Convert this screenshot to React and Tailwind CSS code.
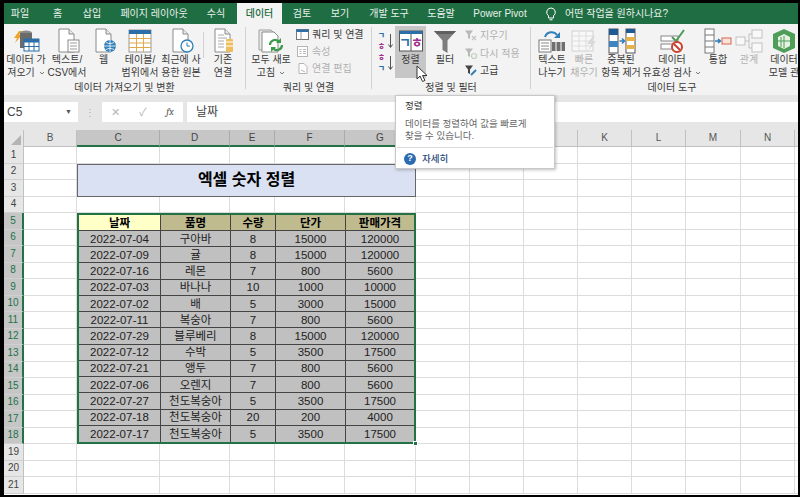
const tabs = [
  ["파일", "w-[32px]"],
  ["홈", "w-[43px]"],
  ["삽입", "w-[26px]"],
  ["페이지 레이아웃", "w-[98px]"],
  ["수식", "w-[26px] mr-[8px]"],
];
const tabsAfter = [
  ["검토", "w-[40px]"],
  ["보기", "w-[36px]"],
  ["개발 도구", "w-[62px]"],
  ["도움말", "w-[42px]"],
  ["Power Pivot", "w-[76px]"],
];

const rows = [
  ["2022-07-04", "구아바", 8, 15000, 120000],
  ["2022-07-09", "귤", 8, 15000, 120000],
  ["2022-07-16", "레몬", 7, 800, 5600],
  ["2022-07-03", "바나나", 10, 1000, 10000],
  ["2022-07-02", "배", 5, 3000, 15000],
  ["2022-07-11", "복숭아", 7, 800, 5600],
  ["2022-07-29", "블루베리", 8, 15000, 120000],
  ["2022-07-12", "수박", 5, 3500, 17500],
  ["2022-07-21", "앵두", 7, 800, 5600],
  ["2022-07-06", "오렌지", 7, 800, 5600],
  ["2022-07-27", "천도복숭아", 5, 3500, 17500],
  ["2022-07-18", "천도복숭아", 20, 200, 4000],
  ["2022-07-17", "천도복숭아", 5, 3500, 17500],
];

const headers = ["날짜", "품명", "수량", "단가", "판매가격"];
const sheetCols = ["B", "C", "D", "E", "F", "G", "H", "I", "J", "K", "L", "M", "N", "O"];
const afterTable = ["H", "I", "J", "K", "L", "M", "N", "O"];
// these header letters sit under the tooltip or past the window edge
const hiddenLabels = ["H", "I", "J", "O"];

function Doc({ children }) {
  return (
    <svg width="30" height="26" viewBox="0 0 30 26">
      <path d="M7 1h10l5 5v18H7z" fill="#fff" stroke="#8a8a8a" />
      <path d="M17 1v5h5" fill="#e8e8e8" stroke="#8a8a8a" />
      {children}
    </svg>
  );
}

function GetDataIcon() {
  return (
    <svg width="30" height="26" viewBox="0 0 30 26">
      <path d="M9 3h-1l-5 7h3l-2 5 7-8h-3l3-4z" fill="#eda62b" />
      <ellipse cx="15" cy="5" rx="6" ry="2.5" fill="#8b8b8b" />
      <path d="M9 5v15h12V5z" fill="#6b6b6b" />
      <rect x="13" y="11" width="15" height="12" fill="#fff" stroke="#2b6ea8" />
      <rect x="13" y="11" width="15" height="3.5" fill="#2b6ea8" />
      <path d="M18 14v9M23 14v9M13 18.500h15" stroke="#2b6ea8" />
    </svg>
  );
}

function TextCsvIcon() {
  return (
    <Doc>
      <rect x="16" y="12" width="11" height="12" fill="#fff" stroke="#8a8a8a" />
      <path d="M18 15h7M18 18h7M18 21h7" stroke="#9a9a9a" />
    </Doc>
  );
}

function WebIcon() {
  return (
    <Doc>
      <circle cx="21" cy="18" r="6" fill="#2f7fb8" />
      <path d="M15 18h12M21 12v12M17 14.500c3 1.500 5 1.500 8 0M17 21.500c3-1.500 5-1.500 8 0" stroke="#fff" strokeWidth=".8" fill="none" />
    </Doc>
  );
}

function TableIcon() {
  return (
    <svg width="30" height="26" viewBox="0 0 30 26">
      <rect x="4" y="2" width="22" height="22" fill="#fff" stroke="#9a9a9a" />
      <rect x="4" y="2" width="22" height="4" fill="#2b6ea8" />
      <path d="M4 10.500h22M4 15h22M4 19.500h22M11.500 6v18M18.500 6v18" stroke="#e0a94d" />
    </svg>
  );
}

function RecentIcon() {
  return (
    <Doc>
      <circle cx="21" cy="18" r="6" fill="#fff" stroke="#2f7fb8" strokeWidth="1.300" />
      <path d="M21 14.500V18h3" stroke="#2f7fb8" fill="none" />
    </Doc>
  );
}

function ExistingIcon() {
  return (
    <Doc>
      <path d="M10 7h6M10 10h9M10 13h6M10 16h6M10 19h6" stroke="#a8a8a8" />
      <rect x="18" y="11" width="7" height="13" rx="1" fill="#eebd5c" />
      <path d="M18 14h7M18 18h7" stroke="#fff" />
    </Doc>
  );
}

function RefreshIcon() {
  return (
    <svg width="30" height="26" viewBox="0 0 30 26">
      <path d="M3 2h12l4 4v16H3z" fill="#e9e9e9" stroke="#a0a0a0" />
      <path d="M6 4h12l4 4v16H6z" fill="#fff" stroke="#8a8a8a" />
      <path d="M14 17a5 5 0 0 1 9-3M26 17a5 5 0 0 1-9 3" stroke="#3c9a4a" strokeWidth="2.200" fill="none" />
      <path d="M25 10v5h-5zM15 24v-5h5z" fill="#3c9a4a" />
    </svg>
  );
}

function SmallIcon({ kind }) {
  return (
    <svg width="14" height="13" viewBox="0 0 14 13" className="shrink-0">
      {kind === "query" && (
        <>
          <rect x=".5" y="1.500" width="12" height="10" fill="#fff" stroke="#777" />
          <rect x=".5" y="1.500" width="12" height="2.500" fill="#2b6ea8" />
          <path d="M5 4v7.500" stroke="#999" />
        </>
      )}
      {kind === "prop" && (
        <>
          <rect x="1.500" y="1.500" width="10" height="10" fill="#fff" stroke="#b5b5b5" />
          <path d="M3.500 4.500h2M3.500 6.500h2M3.500 8.500h2M7 4.500h3M7 6.500h3M7 8.500h3" stroke="#b5b5b5" />
        </>
      )}
      {kind === "edit" && (
        <>
          <path d="M3 1.500h5l3 3v7H3z" fill="#fff" stroke="#b5b5b5" />
          <path d="M5 8l4 2" stroke="#b5b5b5" />
        </>
      )}
      {kind === "clear" && (
        <>
          <path d="M1 1.500h8L6 5.500V10L4 9V5.500z" fill="#b8b8b8" />
          <path d="M8 7l4 4M12 7l-4 4" stroke="#c4c4c4" strokeWidth="1.200" />
        </>
      )}
      {kind === "reapply" && (
        <>
          <path d="M1 1.500h8L6 5.500V10L4 9V5.500z" fill="#b8b8b8" />
          <circle cx="10" cy="9" r="2.500" fill="none" stroke="#bcd0bc" strokeWidth="1.200" />
        </>
      )}
      {kind === "advanced" && (
        <>
          <path d="M1 1.500h8L6 5.500V10L4 9V5.500z" fill="#444" />
          <path d="M7 11l5-5" stroke="#2f7fb8" strokeWidth="2" />
        </>
      )}
    </svg>
  );
}

function SortSmall({ top, bottom, topColor, bottomColor }) {
  return (
    <svg width="16" height="22" viewBox="0 0 16 22">
      <text x="0" y="9" fontSize="7.5" fontWeight="900" fontFamily="Noto Sans CJK KR" fill={topColor}>{top}</text>
      <text x="0" y="20" fontSize="7.5" fontWeight="900" fontFamily="Noto Sans CJK KR" fill={bottomColor}>{bottom}</text>
      <path d="M12.500 5v13M10.500 15.500l2 3 2-3" stroke="#555" fill="none" />
    </svg>
  );
}

function SortBigIcon() {
  return (
    <svg width="24" height="24" viewBox="0 0 24 24">
      <rect x=".5" y="3" width="23" height="20" fill="#fff" stroke="#555" />
      <rect x=".5" y="3" width="23" height="3" fill="#2b6ea8" />
      <path d="M12 6v17" stroke="#555" />
      <text x="6" y="19" fontSize="13" fontWeight="700" textAnchor="middle" fontFamily="Noto Sans CJK KR" fill="#2b6ea8">ㄱ</text>
      <text x="18" y="19" fontSize="13" fontWeight="700" textAnchor="middle" fontFamily="Noto Sans CJK KR" fill="#a0308a">ㅎ</text>
    </svg>
  );
}

function FilterIcon() {
  return (
    <svg width="24" height="26" viewBox="0 0 24 26">
      <path d="M1 3h22l-8.500 9.500V25l-5-3v-9.500z" fill="#7d7d7d" />
      <path d="M1 3h22l-3 3H4z" fill="#5f5f5f" />
    </svg>
  );
}

function SplitIcon() {
  return (
    <svg width="30" height="26" viewBox="0 0 30 26">
      <path d="M8 9c2-6 9-6 12-2" stroke="#2f7fb8" strokeWidth="2" fill="none" />
      <path d="M23 4v6h-6z" fill="#2f7fb8" />
      <rect x="2" y="12" width="12" height="12" fill="#fff" stroke="#777" />
      <path d="M4 15h8M4 18h8M4 21h8" stroke="#888" />
      <rect x="15" y="14" width="13" height="9" fill="#6f6f6f" />
      <path d="M19 14v9M24 14v9" stroke="#fff" />
    </svg>
  );
}

function FlashIcon() {
  return (
    <svg width="30" height="26" viewBox="0 0 30 26" opacity=".45">
      <rect x="3" y="3" width="21" height="20" fill="#fff" stroke="#aaa" />
      <path d="M3 8h21M3 13h21M3 18h21M10 3v20M17 3v20" stroke="#c4c4c4" />
      <path d="M24 8l-6 8h4l-3 7 8-10h-4l3-5z" fill="#bbb" />
    </svg>
  );
}

function DuplicateIcon() {
  return (
    <svg width="30" height="26" viewBox="0 0 30 26">
      <rect x="3" y="1" width="9" height="24" fill="#fff" stroke="#555" />
      <rect x="3" y="1" width="9" height="6" fill="#1f5a94" />
      <rect x="3" y="13" width="9" height="6" fill="#3f85c2" />
      <rect x="20" y="1" width="9" height="24" fill="#fff" stroke="#555" />
      <rect x="20" y="1" width="9" height="4" fill="#1f5a94" />
      <rect x="20" y="9" width="9" height="4" fill="#e6b34a" />
      <rect x="20" y="17" width="9" height="4" fill="#e6b34a" />
      <path d="M13.500 13h4M16 10.500l2.500 2.500-2.500 2.500" stroke="#2f7fb8" strokeWidth="1.500" fill="none" />
    </svg>
  );
}

function ValidationIcon() {
  return (
    <svg width="30" height="26" viewBox="0 0 30 26">
      <rect x="4" y="8" width="17" height="5" fill="#fff" stroke="#888" />
      <rect x="4" y="16" width="12" height="5" fill="#fff" stroke="#888" />
      <path d="M15 9l4 4 8-11" stroke="#4f9a55" strokeWidth="2" fill="none" />
      <circle cx="20" cy="19" r="5" fill="#fff" stroke="#c9412b" strokeWidth="2" />
      <path d="M17 16l6 6" stroke="#c9412b" strokeWidth="2" />
    </svg>
  );
}

function ConsolidateIcon() {
  return (
    <svg width="30" height="26" viewBox="0 0 30 26">
      <rect x="2" y="1" width="9" height="24" fill="#fff" stroke="#777" />
      <path d="M2 7h9M2 13h9M2 19h9" stroke="#777" />
      <path d="M12 13h5M15 11l2.500 2-2.500 2" stroke="#2f7fb8" strokeWidth="1.500" fill="none" />
      <rect x="19" y="10" width="9" height="6" fill="#fbe3dc" stroke="#d4674a" />
    </svg>
  );
}

function RelationIcon() {
  return (
    <svg width="30" height="26" viewBox="0 0 30 26" opacity=".55">
      <rect x="2" y="9" width="9" height="8" fill="#fff" stroke="#999" />
      <rect x="18" y="2" width="10" height="8" fill="#fff" stroke="#999" />
      <rect x="18" y="15" width="10" height="9" fill="#fff" stroke="#999" />
      <path d="M11 13h4M15 6v14M15 6h3M15 20h3" stroke="#999" />
    </svg>
  );
}

function ModelIcon() {
  return (
    <svg width="30" height="26" viewBox="0 0 30 26">
      <path d="M15 1l11 5v14l-11 5-11-5V6z" fill="#4e9e58" />
      <path d="M15 6l6 3v9l-6 3-6-3V9z" fill="#e7f2e2" />
      <path d="M12 9v10M15 8v12M9 13h12" stroke="#4e9e58" />
    </svg>
  );
}

function Caret() {
  return (
    <svg width="6" height="4" viewBox="0 0 6 4" className="inline-block ml-[4px] align-middle">
      <path d="M1 1l2 2 2-2" stroke="#777" fill="none" />
    </svg>
  );
}

function BigButton({ icon, lines, width, disabled, hover, caret }) {
  return (
    <div
      className={`flex flex-col items-center shrink-0 whitespace-nowrap ${width} ${hover ? "bg-[#c6c6c6] h-[52px] mt-[2px] pt-[2px]" : "pt-[4px]"} ${disabled ? "text-[#b0b0b0]" : "text-[#3a3a3a]"}`}
    >
      <div className="h-[25px] flex items-start justify-center">{icon}</div>
      <div className="text-center leading-[13px]">
        {lines.map((l, i) => (
          <div key={i}>
            {l}
            {caret && i === lines.length - 1 && <Caret />}
          </div>
        ))}
      </div>
    </div>
  );
}

function SmallButton({ kind, label, disabled }) {
  return (
    <div className={`flex items-center gap-[2px] h-[17px] whitespace-nowrap ${disabled ? "text-[#b0b0b0]" : "text-[#3a3a3a]"}`}>
      <SmallIcon kind={kind} />
      {label}
    </div>
  );
}

function Group({ label, width, children }) {
  return (
    <div className={`flex flex-col shrink-0 h-full ${width}`}>
      <div className="flex flex-1 min-h-0">{children}</div>
      <div className="h-[16px] leading-[17px] text-center text-[#3a3a3a]">{label}</div>
    </div>
  );
}

function Sep() {
  return <div className="w-px shrink-0 h-[62px] mt-[3px] bg-[#d2d2d2]" />;
}

function Ribbon() {
  return (
    <div className="flex h-[71px] bg-[#f3f3f3] text-[10px] overflow-hidden">
      <Group label="데이터 가져오기 및 변환" width="w-[241px]">
        <BigButton width="w-[44px]" icon={<GetDataIcon />} lines={["데이터 가", "져오기"]} caret />
        <BigButton width="w-[38px]" icon={<TextCsvIcon />} lines={["텍스트/", "CSV에서"]} />
        <BigButton width="w-[35px]" icon={<WebIcon />} lines={["웹"]} />
        <BigButton width="w-[38px]" icon={<TableIcon />} lines={["테이블/", "범위에서"]} />
        <BigButton width="w-[44px]" icon={<RecentIcon />} lines={["최근에 사", "용한 원본"]} />
        <div className="w-px h-[26px] mt-[8px] bg-[#d2d2d2] shrink-0" />
        <BigButton width="w-[38px]" icon={<ExistingIcon />} lines={["기존", "연결"]} />
      </Group>
      <Sep />
      <Group label="쿼리 및 연결" width="w-[125px]">
        <BigButton width="w-[50px]" icon={<RefreshIcon />} lines={["모두 새로", "고침"]} caret />
        <div className="flex flex-col pt-[2px]">
          <SmallButton kind="query" label="쿼리 및 연결" />
          <SmallButton kind="prop" label="속성" disabled />
          <SmallButton kind="edit" label="연결 편집" disabled />
        </div>
      </Group>
      <Sep />
      <Group label="정렬 및 필터" width="w-[158px]">
        <div className="w-[23px] shrink-0 flex flex-col items-end pr-[1px] pt-[5px]">
          <SortSmall top="ㄱ" bottom="ㅎ" topColor="#2b6ea8" bottomColor="#a0308a" />
          <SortSmall top="ㅎ" bottom="ㄱ" topColor="#a0308a" bottomColor="#2b6ea8" />
        </div>
        <BigButton width="w-[31px]" hover icon={<SortBigIcon />} lines={["정렬"]} />
        <BigButton width="w-[38px]" icon={<FilterIcon />} lines={["필터"]} />
        <div className="flex flex-col pt-[3px] gap-[0.5px]">
          <SmallButton kind="clear" label="지우기" disabled />
          <SmallButton kind="reapply" label="다시 적용" disabled />
          <SmallButton kind="advanced" label="고급" />
        </div>
      </Group>
      <Sep />
      <Group label="데이터 도구" width="w-[282px]">
        <BigButton width="w-[42px]" icon={<SplitIcon />} lines={["텍스트", "나누기"]} />
        <BigButton width="w-[22px]" disabled icon={<FlashIcon />} lines={["빠른", "채우기"]} />
        <BigButton width="w-[52px]" icon={<DuplicateIcon />} lines={["중복된", "항목 제거"]} />
        <BigButton width="w-[50px]" icon={<ValidationIcon />} lines={["데이터", "유효성 검사"]} caret />
        <BigButton width="w-[42px]" icon={<ConsolidateIcon />} lines={["통합"]} />
        <BigButton width="w-[20px]" disabled icon={<RelationIcon />} lines={["관계"]} />
        <BigButton width="w-[50px]" icon={<ModelIcon />} lines={["데이터", "모델 관"]} />
      </Group>
    </div>
  );
}

function FormulaBar() {
  return (
    <div className="flex items-stretch h-[35px] pt-[7px] pb-[8px] bg-[#e6e6e6] text-[12px] text-[#444]">
      <div className="w-[74px] bg-white flex items-center justify-between px-[3px]">
        <span>C5</span>
        <span className="text-[7px] text-[#555] pr-[3px]">▼</span>
      </div>
      <div className="w-[24px] flex items-center justify-center text-[#aaa] text-[10px]">⋮</div>
      <div className="w-[81px] bg-white flex items-center text-[#b5b5b5] text-[11px]">
        <span className="w-[27px] text-center">✕</span>
        <span className="w-[28px] text-center">✓</span>
        <span className="w-[26px] text-center text-[#555] italic font-serif text-[10px]">fx</span>
      </div>
      <div className="flex-1 ml-[4px] bg-white flex items-center pl-[9px]">날짜</div>
    </div>
  );
}

function Empty() {
  return <div className="bg-white border-r border-b border-[#dcdcdc]" />;
}

function RowHead({ n, on }) {
  return (
    <div className={`flex items-center justify-center text-[10px] border-b border-[#d0d0d0] ${on ? "bg-[#c6c6c6] border-r-2 border-r-[#217346] text-[#217346]" : "bg-[#e6e6e6] border-r border-r-[#c0c0c0] text-[#444]"}`}>
      {n}
    </div>
  );
}

function Sheet() {
  return (
    <div className="grid grid-cols-[20px_53px_83px_70px_45px_70px_71px_54px_54px_54px_54px_54px_55px_54px_54px] grid-rows-[17px_repeat(21,16.5px)] text-[11.5px] leading-[14px] text-[#222] overflow-hidden">
      <div className="bg-[#e6e6e6] flex items-end justify-end p-[2px] border-r border-[#c0c0c0]">
        <div className="size-0 border-l-[10px] border-b-[10px] border-l-transparent border-b-[#b4b4b4]" />
      </div>
      {sheetCols.map((c) => {
        const on = ["C", "D", "E", "F", "G"].includes(c);
        return (
          <div
            key={c}
            className={`flex items-center justify-center text-[10px] border-r ${on ? "bg-[#c6c6c6] border-b-2 border-b-[#217346] border-r-[#aaa] text-[#444]" : "bg-[#e6e6e6] border-b border-b-[#c0c0c0] border-r-[#c0c0c0] text-[#555]"}`}
          >
            {hiddenLabels.includes(c) ? "" : c}
          </div>
        );
      })}

      <div className="col-start-3 col-end-8 row-start-3 row-end-5 bg-[#d9e1f2] border-[1.5px] border-[#666] flex items-center justify-center font-bold text-[16px] text-black">
        엑셀 숫자 정렬
      </div>

      <div className="col-start-3 col-end-8 row-start-6 row-end-20 relative border-2 border-[#217346] grid grid-cols-[81px_70px_45px_70px_1fr] grid-rows-[16px_repeat(13,minmax(0,1fr))]">
        {headers.map((h, i) => (
          <div
            key={h}
            className={`flex items-center justify-center font-bold text-black border-b border-[#444] ${i === 0 ? "bg-[#ffffc8]" : "bg-[#bfbb8e] border-l border-l-[#444]"}`}
          >
            {h}
          </div>
        ))}
        {rows.map((r, ri) =>
          r.map((v, i) => (
            <div
              key={r[0] + i}
              className={`flex items-center justify-center bg-[#c0c0c0] border-[#444] ${ri < rows.length - 1 ? "border-b" : ""} ${i > 0 ? "border-l" : ""}`}
            >
              {v}
            </div>
          ))
        )}
        <div className="absolute right-[-4px] bottom-[-4px] size-[5px] bg-[#217346] border border-white" />
      </div>

      {Array.from({ length: 21 }, (_, idx) => {
        const n = idx + 1;
        const on = n >= 5 && n <= 18;
        const merged = n === 2 || n === 3 || on;
        const cells = merged ? afterTable : sheetCols.slice(1);
        return [
          <RowHead key={`h${n}`} n={n} on={on} />,
          <Empty key={`b${n}`} />,
          ...cells.map((c) => <Empty key={c + n} />),
        ];
      })}
    </div>
  );
}

function Tooltip() {
  return (
    <div className="absolute left-[391px] top-[92px] w-[160px] h-[74px] bg-white border border-[#c8c8c8] shadow-[1px_1px_3px_rgba(0,0,0,0.25)] text-[9.500px] text-[#444]">
      <div className="pl-[9px] pt-[3px] leading-[14px] text-[#333]">정렬</div>
      <div className="pl-[9px] mt-[5px] leading-[12px] text-[#666]">
        데이터를 정렬하여 값을 빠르게
        <br />
        찾을 수 있습니다.
      </div>
      <div className="border-t border-[#dcdcdc] mx-[1px] mt-[5px] flex items-center pl-[7px] pt-[4px] gap-[6px]">
        <span className="size-[12px] rounded-full bg-[#2b6cb0] text-white text-[9px] font-bold flex items-center justify-center">?</span>
        <span className="font-medium text-[#2a4a7a]">자세히</span>
      </div>
    </div>
  );
}

function Cursor() {
  return (
    <svg className="absolute left-[412px] top-[62px]" width="13" height="18" viewBox="0 0 13 18">
      <path d="M1 1v13l3-3 2.500 5.500 2.500-1L6.500 10.500H11z" fill="#fff" stroke="#222" strokeWidth=".9" />
    </svg>
  );
}

export default function App() {
  return (
    <div
      className="relative w-[800px] h-[497px] overflow-hidden border-t-[3px] border-l-[4px] border-r-[2px] border-b-[2px] border-black bg-white"
      style={{ fontFamily: '"Liberation Sans", "Noto Sans CJK KR", sans-serif' }}
    >
      <div className="flex h-[21px] bg-[#1f6e43] text-[10px] text-[#e8f1ec] items-center">
        {tabs.map(([t, w]) => (
          <div key={t} className={`${w} text-center whitespace-nowrap`}>{t}</div>
        ))}
        <div className="w-[45px] h-full flex items-center justify-center bg-[#f3f3f3] text-[#1f6e43] font-medium">데이터</div>
        {tabsAfter.map(([t, w]) => (
          <div key={t} className={`${w} text-center whitespace-nowrap`}>{t}</div>
        ))}
        <svg width="12" height="14" viewBox="0 0 12 14" className="ml-[7px]">
          <path d="M6 1a4.300 4.300 0 0 0-2.500 7.800V11h5V8.800A4.300 4.300 0 0 0 6 1zM4.500 12.800h3" stroke="#fff" fill="none" />
        </svg>
        <span className="ml-[8px] whitespace-nowrap">어떤 작업을 원하시나요?</span>
      </div>
      <Ribbon />
      <FormulaBar />
      <Sheet />
      <Tooltip />
      <Cursor />
    </div>
  );
}
